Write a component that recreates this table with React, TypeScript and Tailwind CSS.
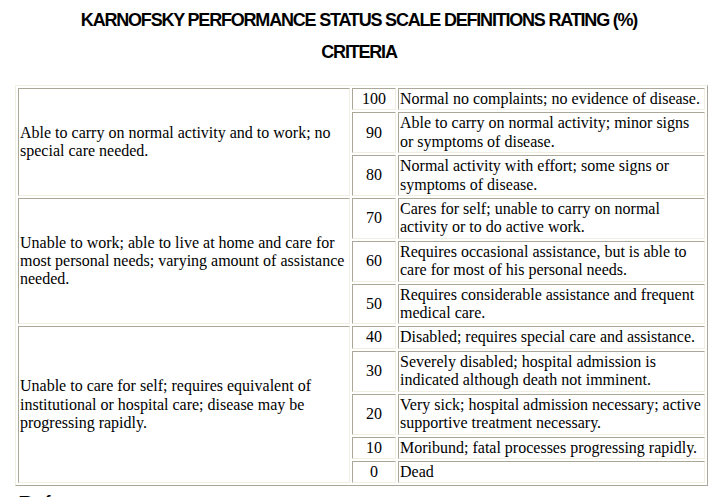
import React from 'react';

type Row = { score: string; text: string };
type Group = { label: string; rows: Row[] };

const groups: Group[] = [
  {
    label: 'Able to carry on normal activity and to work; no special care needed.',
    rows: [
      { score: '100', text: 'Normal no complaints; no evidence of disease.' },
      { score: '90', text: 'Able to carry on normal activity; minor signs or symptoms of disease.' },
      { score: '80', text: 'Normal activity with effort; some signs or symptoms of disease.' },
    ],
  },
  {
    label:
      'Unable to work; able to live at home and care for most personal needs; varying amount of assistance needed.',
    rows: [
      { score: '70', text: 'Cares for self; unable to carry on normal activity or to do active work.' },
      { score: '60', text: 'Requires occasional assistance, but is able to care for most of his personal needs.' },
      { score: '50', text: 'Requires considerable assistance and frequent medical care.' },
    ],
  },
  {
    label:
      'Unable to care for self; requires equivalent of institutional or hospital care; disease may be progressing rapidly.',
    rows: [
      { score: '40', text: 'Disabled; requires special care and assistance.' },
      { score: '30', text: 'Severely disabled; hospital admission is indicated although death not imminent.' },
      { score: '20', text: 'Very sick; hospital admission necessary; active supportive treatment necessary.' },
      { score: '10', text: 'Moribund; fatal processes progressing rapidly.' },
      { score: '0', text: 'Dead' },
    ],
  },
];

// inset cell border like an old IE table with border=1
const cell =
  'border border-t-[#aca899] border-l-[#aca899] border-b-[#f1efe2] border-r-[#f1efe2] p-[1px]';

const App: React.FC = () => {
  return (
    <div className="bg-white text-black h-[497px] overflow-hidden">
      {/* Title */}
      <div className="pt-[4px] text-center font-['Liberation_Sans',Arial,sans-serif] font-bold text-[18px] leading-[32px] tracking-[-1.2px]">
        <p>KARNOFSKY PERFORMANCE STATUS SCALE DEFINITIONS RATING (%)</p>
        <p>CRITERIA</p>
      </div>

      {/* Scale table */}
      <table className="mt-[17px] ml-[15px] w-[693px] border-separate border-spacing-[2px] border border-t-[#f1efe2] border-l-[#f1efe2] border-b-[#aca899] border-r-[#aca899] font-['Liberation_Serif','Times_New_Roman',serif] text-[16px] leading-[18.4px]">
        <tbody>
          {groups.map((g) =>
            g.rows.map((r, i) => (
              <tr key={r.score}>
                {i === 0 && (
                  <td rowSpan={g.rows.length} className={`${cell} w-[332px] align-middle`}>
                    {g.label}
                  </td>
                )}
                <td className={`${cell} w-[44px] text-center align-middle`}>{r.score}</td>
                <td className={`${cell} align-top`}>{r.text}</td>
              </tr>
            ))
          )}
        </tbody>
      </table>

      <p className="mt-[5px] ml-[18px] font-['Liberation_Sans',Arial,sans-serif] text-[21px] leading-[24px]">
        References
      </p>
    </div>
  );
};

export default App;
